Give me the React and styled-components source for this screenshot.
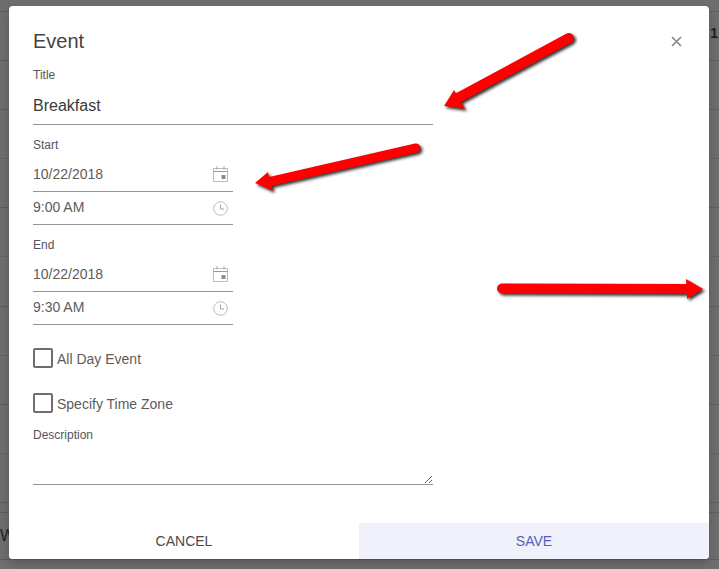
import styled, { createGlobalStyle } from 'styled-components'

const GlobalStyle = createGlobalStyle`
  html, body {
    margin: 0;
    height: 100%;
    overflow: hidden;
    background: #6d6d6d;
    font-family: "Liberation Sans", Arial, sans-serif;
  }
`

const Page = styled.div`
  position: relative;
  width: 719px;
  height: 569px;
  overflow: hidden;
  background: #6e6e6e;
  padding-top: 11px;
  box-sizing: border-box;
`

const GridRow = styled.div`
  height: 49.1px;
  box-sizing: border-box;
  padding: 13px 1px 0 0;
  border-top: 1px ${p => (p.$dotted ? 'dotted #585858' : 'solid #5e5e5e')};
  text-align: right;
  font-size: 14px;
  line-height: 16px;
  font-weight: bold;
  color: #1c1c1c;
`

const GridGap = styled.div`
  height: 10px;
  box-sizing: border-box;
  border-top: 1px solid #5e5e5e;
`

const GridFooter = styled.div`
  height: 48px;
  box-sizing: border-box;
  border-top: 1px solid #5e5e5e;
  border-bottom: 1px solid #5e5e5e;
  display: flex;
  align-items: center;
  font-size: 16px;
  color: #222;
`

const Dialog = styled.div`
  position: absolute;
  left: 9px;
  top: 6px;
  width: 700px;
  height: 553px;
  background: #fff;
  border-radius: 4px;
  overflow: hidden;
  display: flex;
  flex-direction: column;
  color: #333;
`

const DialogFrame = styled.div`
  position: absolute;
  left: 9px;
  top: 6px;
  width: 700px;
  height: 553px;
  border-radius: 4px;
  box-shadow: 0 4px 10px rgba(0, 0, 0, 0.2);
`

const Header = styled.header`
  height: 62px;
  padding: 21px 24px 13px;
  box-sizing: border-box;
  display: flex;
  justify-content: space-between;
  align-items: flex-start;
`

const Heading = styled.h2`
  margin: 0;
  font-size: 20px;
  font-weight: normal;
  line-height: 28px;
  color: #444;
`

const CloseButton = styled.button`
  border: 0;
  padding: 0;
  background: none;
  display: flex;
  margin: 9px 3px 0 0;
`

const Form = styled.div`
  padding: 0 24px;
  display: flex;
  flex-direction: column;
`

const Label = styled.label`
  display: block;
  font-size: 12px;
  line-height: 14px;
  color: #555;
  margin-top: ${p => p.$top || 0}px;
`

const TitleInput = styled.input`
  display: block;
  width: 400px;
  height: 43px;
  box-sizing: border-box;
  padding: 6px 0 0;
  border: 0;
  border-bottom: 1px solid #949494;
  outline: none;
  font: 16px "Liberation Sans", Arial, sans-serif;
  color: #3a3a3a;
`

const PickerRow = styled.div`
  width: 200px;
  height: ${p => (p.$time ? 33 : 40)}px;
  box-sizing: border-box;
  padding: ${p => (p.$time ? '0 5px 2px 0' : '5px 5px 0 0')};
  border-bottom: 1px solid #949494;
  display: flex;
  align-items: center;
  justify-content: space-between;
`

const PickerInput = styled.input`
  width: 170px;
  border: 0;
  padding: 0;
  outline: none;
  font: 14px "Liberation Sans", Arial, sans-serif;
  color: #5c5c5c;
`

const IconSlot = styled.span`
  display: flex;
  margin-top: ${p => p.$top || 0}px;
`

const Check = styled.label`
  display: flex;
  align-items: center;
  gap: 4px;
  height: 20px;
  margin-top: ${p => p.$top}px;
  font-size: 14px;
  color: #5c5c5c;
`

const CheckText = styled.span`
  padding-top: 2px;
`

const CheckBox = styled.span`
  width: 20px;
  height: 20px;
  box-sizing: border-box;
  border: 2px solid #6e6e6e;
  border-radius: 2px;
`

const Notes = styled.textarea`
  display: block;
  width: 400px;
  height: 43px;
  box-sizing: border-box;
  padding: 0;
  border: 0;
  border-bottom: 1px solid #949494;
  outline: none;
  resize: both;
  font: 14px "Liberation Sans", Arial, sans-serif;
`

const Footer = styled.footer`
  margin-top: auto;
  height: 36px;
  display: grid;
  grid-template-columns: 1fr 1fr;
`

const ActionButton = styled.button`
  border: 0;
  padding: 0;
  font: 14px "Liberation Sans", Arial, sans-serif;
  text-transform: uppercase;
  background: ${p => (p.$primary ? '#f0f1fa' : '#fff')};
  color: ${p => (p.$primary ? '#5261c0' : '#4a4a4a')};
`

const ArrowLayer = styled.svg`
  position: absolute;
  left: 0;
  top: 0;
  filter: drop-shadow(2px 2px 1.5px rgba(0, 0, 0, 0.8));
`

const CalendarIcon = () => (
  <svg width="15" height="16" viewBox="0 0 15 16" fill="none" stroke="#bcbcbc" strokeWidth="1">
    <path d="M.5 2.5h14v13H.5z" />
    <path d="M.5 5.5h14" stroke="#999" />
    <path d="M4 0v3.5M11 0v3.5" stroke="#aaa" />
    <rect x="8.5" y="9" width="4" height="4" fill="#8c8c8c" stroke="none" />
  </svg>
)

const ClockIcon = () => (
  <svg width="15" height="15" viewBox="0 0 15 15" fill="none" stroke="#bcbcbc" strokeWidth="1">
    <circle cx="7.5" cy="7.5" r="6.8" />
    <path d="M7.5 3.5v4.5h3.5" stroke="#a0a0a0" />
  </svg>
)

const CloseIcon = () => (
  <svg width="11" height="11" viewBox="0 0 11 11" fill="none" stroke="#858585" strokeWidth="1.6">
    <path d="M1 1l9 9M10 1l-9 9" />
  </svg>
)

const rowLines = [false, false, true, false, true, false, true, false, true]

const Arrow = ({ from, to, width, head }) => (
  <>
    <line x1={from[0]} y1={from[1]} x2={to[0]} y2={to[1]} stroke="#fe0000" strokeWidth={width} strokeLinecap="round" />
    <polygon points={head} fill="#fe0000" />
  </>
)

function DateTimeField({ label, top, date, time }) {
  return (
    <>
      <Label $top={top}>{label}</Label>
      <PickerRow>
        <PickerInput readOnly value={date} />
        <IconSlot>
          <CalendarIcon />
        </IconSlot>
      </PickerRow>
      <PickerRow $time>
        <PickerInput readOnly value={time} />
        <IconSlot $top={2}>
          <ClockIcon />
        </IconSlot>
      </PickerRow>
    </>
  )
}

export default function App() {
  return (
    <>
      <GlobalStyle />
      <Page>
        <GridRow>1</GridRow>
        {rowLines.map((dotted, i) => (
          <GridRow key={i} $dotted={dotted} />
        ))}
        <GridGap />
        <GridFooter>W</GridFooter>

        <DialogFrame />
        <Dialog>
          <Header>
            <Heading>Event</Heading>
            <CloseButton aria-label="Close">
              <CloseIcon />
            </CloseButton>
          </Header>
          <Form>
            <Label>Title</Label>
            <TitleInput readOnly value="Breakfast" />
            <DateTimeField label="Start" top={13} date="10/22/2018" time="9:00 AM" />
            <DateTimeField label="End" top={13} date="10/22/2018" time="9:30 AM" />
            <Check $top={23}>
              <CheckBox />
              <CheckText>All Day Event</CheckText>
            </Check>
            <Check $top={25}>
              <CheckBox />
              <CheckText>Specify Time Zone</CheckText>
            </Check>
            <Label $top={15}>Description</Label>
            <Notes />
          </Form>
          <Footer>
            <ActionButton>Cancel</ActionButton>
            <ActionButton $primary>Save</ActionButton>
          </Footer>
        </Dialog>

        <ArrowLayer width="719" height="569">
          <Arrow from={[569, 38]} to={[456, 99]} width={10} head="444,106 454,90 465,109" />
          <Arrow from={[416, 148]} to={[268, 182]} width={9} head="255,183 268,172 273,191" />
          <Arrow from={[502, 288.5]} to={[690, 289]} width={10} head="703,289 686,279 687,299" />
        </ArrowLayer>
      </Page>
    </>
  )
}
